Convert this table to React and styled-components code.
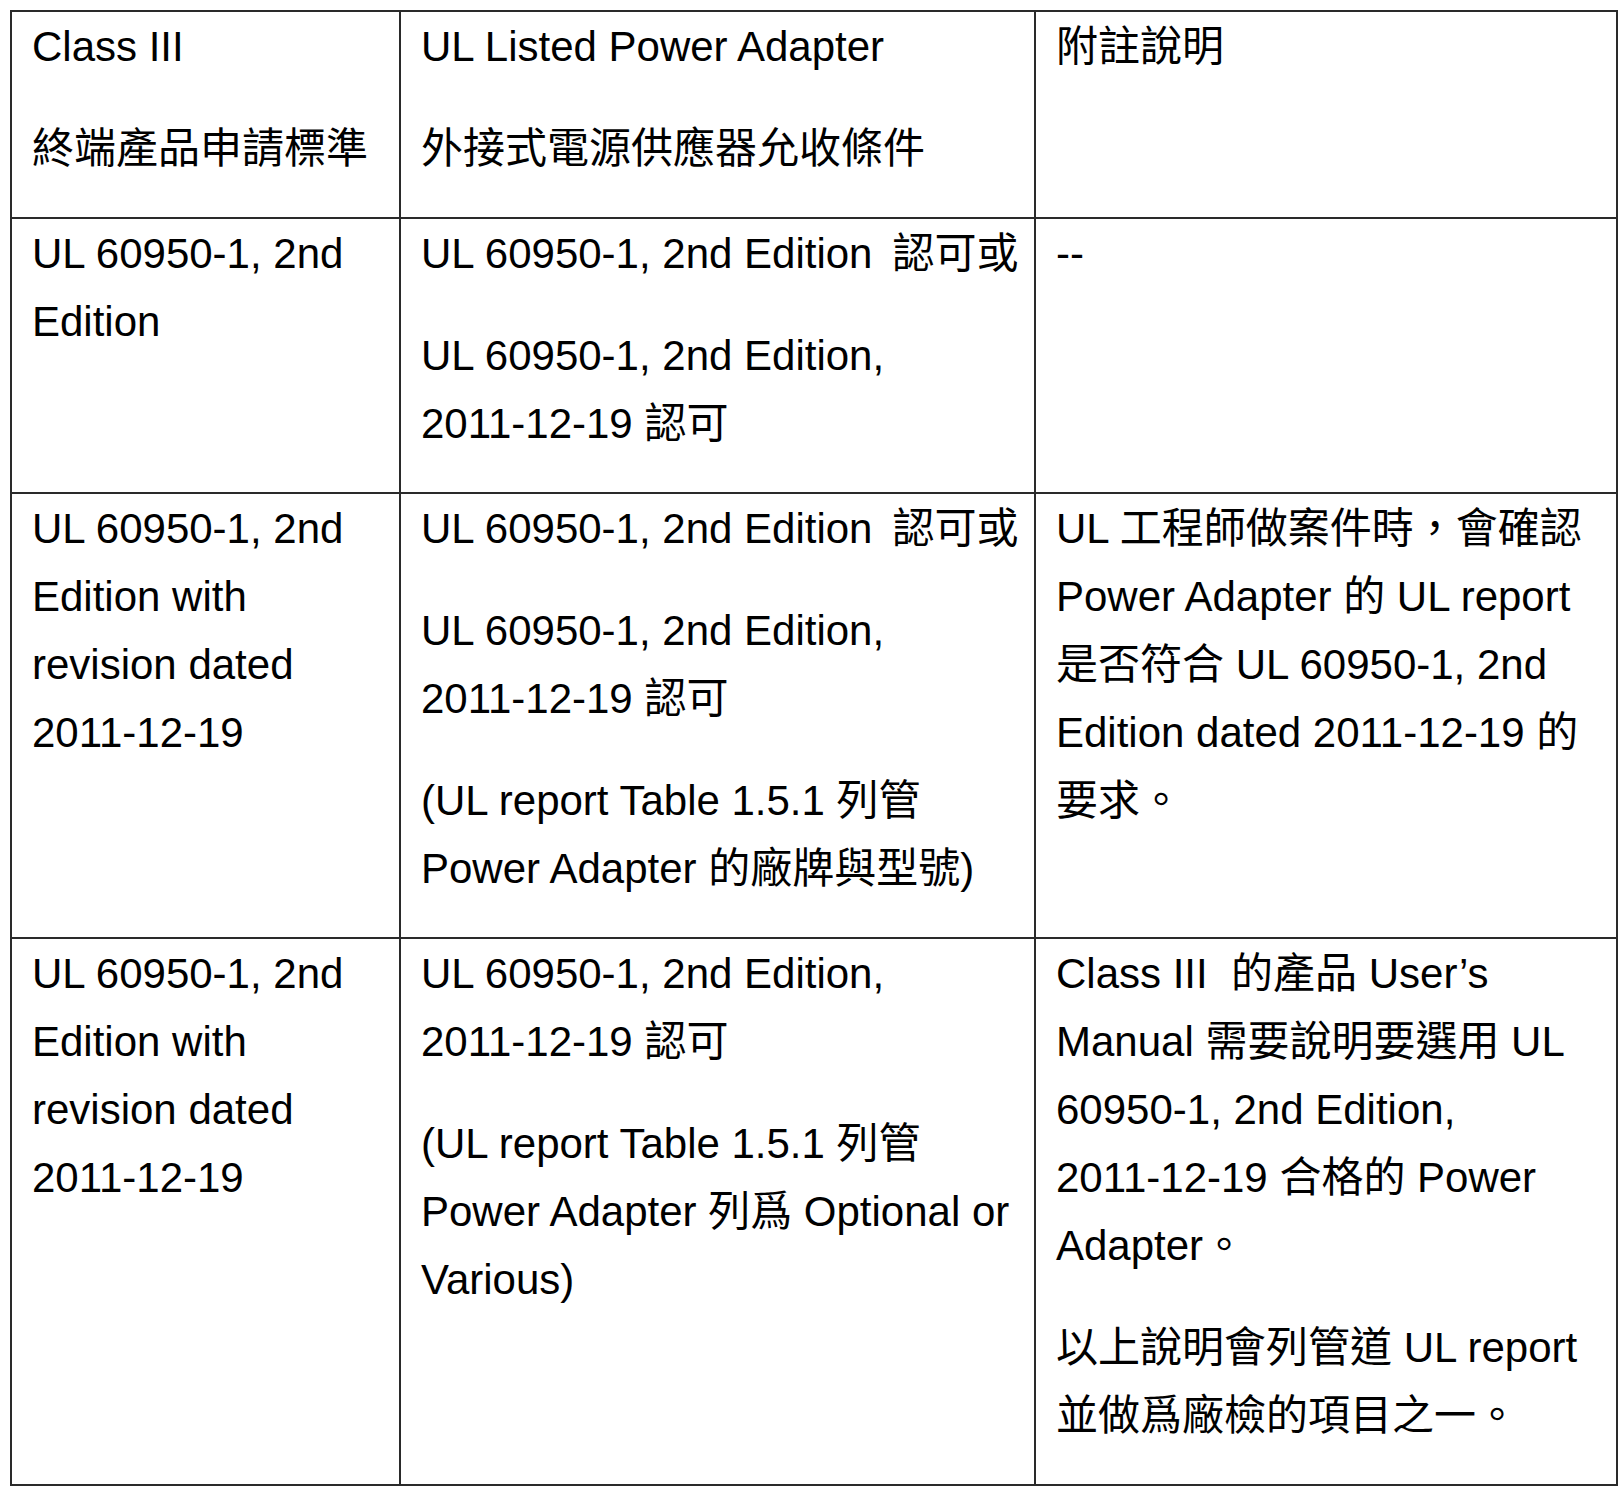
import React from 'react'
import styled, { createGlobalStyle } from 'styled-components'

const GlobalStyle = createGlobalStyle`
  body {
    margin: 0;
    background: #ffffff;
    color: #000000;
    font-family: "Liberation Sans", "Noto Sans CJK TC", sans-serif;
  }
`

const Page = styled.div`
  padding: 10px 0 0 10px;
`

const Table = styled.table`
  border-collapse: collapse;
  table-layout: fixed;
  width: 1606px;
`

const Col = styled.col`
  width: ${p => p.$w}px;
`

const Cell = styled.td`
  border: 2px solid #2a2a2a;
  vertical-align: top;
  padding: 1px 8px 0 20px;
`

const Para = styled.div`
  margin-bottom: 34px;
`

const Line = styled.div`
  height: 68px;
  line-height: 68px;
  font-size: 42px;
  white-space: pre;
`

const rows = [
  [
    [['Class III'], ['終端產品申請標準']],
    [['UL Listed Power Adapter'], ['外接式電源供應器允收條件']],
    [['附註說明']]
  ],
  [
    [['UL 60950-1, 2nd', 'Edition']],
    [['UL 60950-1, 2nd Edition \u2009認可或'], ['UL 60950-1, 2nd Edition,', '2011-12-19 認可']],
    [['--']]
  ],
  [
    [['UL 60950-1, 2nd', 'Edition with', 'revision dated', '2011-12-19']],
    [
      ['UL 60950-1, 2nd Edition \u2009認可或'],
      ['UL 60950-1, 2nd Edition,', '2011-12-19 認可'],
      ['(UL report Table 1.5.1 列管', 'Power Adapter 的廠牌與型號)']
    ],
    [[
      'UL 工程師做案件時，會確認',
      'Power Adapter 的 UL report',
      '是否符合 UL 60950-1, 2nd',
      'Edition dated 2011-12-19 的',
      '要求。'
    ]]
  ],
  [
    [['UL 60950-1, 2nd', 'Edition with', 'revision dated', '2011-12-19']],
    [
      ['UL 60950-1, 2nd Edition,', '2011-12-19 認可'],
      ['(UL report Table 1.5.1 列管', 'Power Adapter 列爲 Optional or', 'Various)']
    ],
    [
      [
        'Class III  的產品 User’s',
        'Manual 需要說明要選用 UL',
        '60950-1, 2nd Edition,',
        '2011-12-19 合格的 Power',
        'Adapter。'
      ],
      ['以上說明會列管道 UL report', '並做爲廠檢的項目之一。']
    ]
  ]
]

const App = () => (
  <Page>
    <GlobalStyle />
    <Table>
      <colgroup>
        <Col $w={389} />
        <Col $w={635} />
        <Col $w={582} />
      </colgroup>
      <tbody>
        {rows.map((row, r) => (
          <tr key={r}>
            {row.map((cell, c) => (
              <Cell key={c}>
                {cell.map((para, p) => (
                  <Para key={p}>
                    {para.map((line, l) => (
                      <Line key={l}>{line}</Line>
                    ))}
                  </Para>
                ))}
              </Cell>
            ))}
          </tr>
        ))}
      </tbody>
    </Table>
  </Page>
)

export default App
